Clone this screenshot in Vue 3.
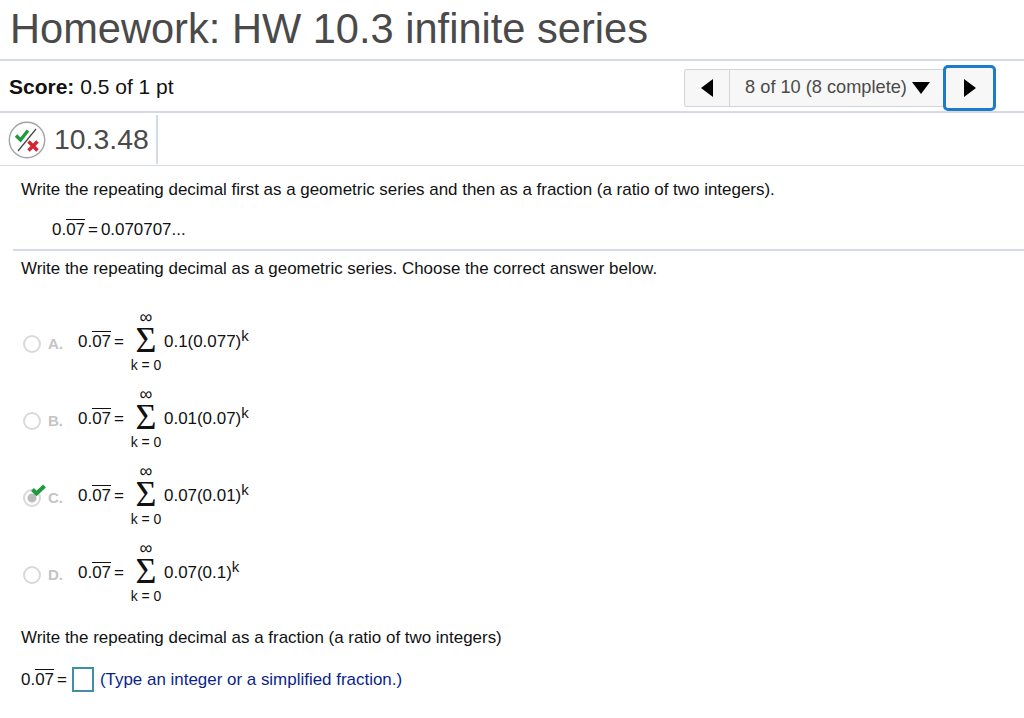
<template>
  <div class="page">
    <h1 class="title">Homework: HW 10.3 infinite series</h1>

    <div class="score-bar">
      <div class="score"><b>Score:</b> 0.5 of 1 pt</div>
      <div class="pager">
        <button class="pager-btn prev"><span class="tri-left"></span></button>
        <button class="pager-mid">8 of 10 (8 complete)<span class="tri-down"></span></button>
        <button class="pager-btn next"><span class="tri-right"></span></button>
      </div>
    </div>

    <div class="question-bar">
      <div class="question-id">
        <svg class="status-icon" width="38" height="38" viewBox="0 0 38 38">
          <circle cx="19" cy="19" r="17.7" fill="#fff" stroke="#a3a3a3" stroke-width="1.4" />
          <path d="M8 14.5l4.5 4.5L20 9.5" fill="none" stroke="#1f9a3f" stroke-width="3.4" />
          <path d="M10 30L28 8" fill="none" stroke="#444" stroke-width="1.2" />
          <path d="M20.5 20.5l9 9M29.5 20.5l-9 9" fill="none" stroke="#d8232f" stroke-width="3.4" />
        </svg>
        <span>10.3.48</span>
      </div>
    </div>

    <div class="content">
      <p class="intro">Write the repeating decimal first as a geometric series and then as a fraction (a ratio of two integers).</p>
      <p class="given"><span>0.<span class="bar">07</span></span><span class="eq">=</span>0.070707...</p>
      <div class="rule"></div>
      <p class="prompt">Write the repeating decimal as a geometric series. Choose the correct answer below.</p>

      <div class="options">
        <div v-for="opt in options" :key="opt.letter" class="option">
          <div class="radio-wrap">
            <span class="radio" :class="{ selected: opt.selected }"></span>
            <svg v-if="opt.selected" class="check" width="15" height="12" viewBox="0 0 15 12">
              <path d="M1.5 5.5l4 4L13.5 2" fill="none" stroke="#1f9a3f" stroke-width="4" />
            </svg>
          </div>
          <span class="letter">{{ opt.letter }}.</span>
          <span class="lhs">0.<span class="bar">07</span><span class="eq">=</span></span>
          <span class="sum">
            <span class="inf">∞</span>
            <span class="sigma">Σ</span>
            <span class="lower">k = 0</span>
          </span>
          <span class="term">{{ opt.term }}<sup>k</sup></span>
        </div>
      </div>

      <p class="prompt2">Write the repeating decimal as a fraction (a ratio of two integers)</p>
      <div class="answer">
        <span class="lhs">0.<span class="bar">07</span><span class="eq">=</span></span>
        <span class="answer-box"></span>
        <span class="hint">(Type an integer or a simplified fraction.)</span>
      </div>
    </div>
  </div>
</template>

<script setup>
const options = [
  { letter: 'A', term: '0.1(0.077)' },
  { letter: 'B', term: '0.01(0.07)' },
  { letter: 'C', term: '0.07(0.01)', selected: true },
  { letter: 'D', term: '0.07(0.1)' }
];
</script>

<style>
html, body {
  background: #fff;
}
</style>

<style scoped>
.page {
  width: 1024px;
  height: 718px;
  overflow: hidden;
  font-family: "Liberation Sans", Arial, sans-serif;
  color: #111;
  font-size: 16.95px;
  background: #fff;
}

.title {
  margin: 0;
  height: 59px;
  padding-left: 10px;
  font-size: 41.6px;
  font-weight: 400;
  line-height: 57px;
  color: #4a4a4a;
  border-bottom: 2px solid #d5dbe5;
}

.score-bar {
  height: 50px;
  display: flex;
  align-items: center;
  justify-content: space-between;
  padding: 0 28px 0 9px;
  border-bottom: 2px solid #d5dbe5;
  font-size: 21px;
}

.score {
  margin-top: 2px;
}

.pager {
  display: flex;
  height: 38px;
  margin-top: 3px;
}

.pager button {
  background: #f7f7f7;
  border: 1px solid #d4d4d4;
  padding: 0;
  display: flex;
  align-items: center;
  justify-content: center;
  font-family: inherit;
}

.prev {
  width: 45px;
  border-radius: 3px 0 0 3px;
  border-right: none !important;
}

.pager-mid {
  width: 214px;
  padding-left: 2px !important;
  font-size: 18.2px;
  color: #4a4a4a;
  border-right: none !important;
}

.next {
  width: 53px;
  height: 46px;
  margin-top: -4px;
  border: 3px solid #1e7bc8 !important;
  border-radius: 5px;
}

.tri-left {
  border-top: 9px solid transparent;
  border-bottom: 9px solid transparent;
  border-right: 12px solid #000;
}

.tri-right {
  border-top: 9px solid transparent;
  border-bottom: 9px solid transparent;
  border-left: 12px solid #000;
}

.tri-down {
  margin-left: 5px;
  border-left: 9px solid transparent;
  border-right: 9px solid transparent;
  border-top: 12px solid #000;
}

.question-bar {
  height: 52px;
  border-bottom: 1px solid #d5dbe5;
}

.question-id {
  display: inline-flex;
  align-items: center;
  gap: 8px;
  height: 49px;
  margin-top: 2px;
  padding: 0 7px 0 8px;
  border-right: 2px solid #d5dbe5;
  font-size: 28.4px;
  color: #4a4a4a;
}

.content {
  padding-left: 21px;
}

.content p {
  margin: 0;
  line-height: 20px;
}

.intro {
  padding-top: 14px;
}

.given {
  padding: 20px 0 0 31px;
}

.bar {
  border-top: 1px solid #111;
  line-height: 1;
}

.eq {
  margin: 0 3px;
}

.rule {
  margin: 9px 0 0 -8px;
  height: 2px;
  background: #d5dbe5;
}

.prompt {
  padding-top: 8px;
}

.options {
  margin-top: 27px;
  display: flex;
  flex-direction: column;
  gap: 8px;
}

.option {
  height: 69px;
  display: flex;
  align-items: center;
}

.radio-wrap {
  position: relative;
  width: 20px;
  height: 18px;
  margin: 6px 0 0 2px;
}

.radio {
  display: block;
  box-sizing: border-box;
  width: 18px;
  height: 18px;
  border: 2px solid #d9d9d9;
  border-radius: 50%;
}

.radio.selected {
  background: radial-gradient(circle, #bdbdbd 0 4px, #fff 5px);
}

.check {
  position: absolute;
  top: -5px;
  left: 8px;
}

.letter {
  width: 30px;
  margin: 6px 0 0 5px;
  font-weight: 700;
  font-size: 15px;
  color: #c4c4c4;
}

.option .lhs {
  width: 50px;
  margin-top: 2px;
}

.sum {
  width: 36px;
  margin-top: 3px;
  display: flex;
  flex-direction: column;
  align-items: center;
}

.inf {
  font-size: 18px;
  line-height: 16px;
}

.sigma {
  font-family: "Liberation Serif", serif;
  font-size: 36px;
  line-height: 30px;
}

.lower {
  font-size: 14px;
  line-height: 20px;
}

.term {
  margin-top: 2px;
}

.term sup {
  font-size: 15px;
  line-height: 0;
  vertical-align: 6px;
}

.prompt2 {
  margin-top: 22px !important;
}

.answer {
  display: flex;
  align-items: center;
  gap: 2px;
  margin-top: 19px;
}

.answer-box {
  box-sizing: border-box;
  width: 22px;
  height: 25px;
  border: 2px solid #3f8fa8;
}

.hint {
  margin-left: 4px;
  color: #0b1f8a;
}
</style>
